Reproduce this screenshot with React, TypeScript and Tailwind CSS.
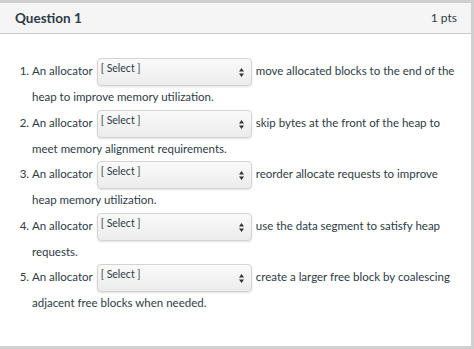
import React from "react";

const items = [
  { before: "An allocator", after: "move allocated blocks to the end of the heap to improve memory utilization." },
  { before: "An allocator", after: "skip bytes at the front of the heap to meet memory alignment requirements." },
  { before: "An allocator", after: "reorder allocate requests to improve heap memory utilization." },
  { before: "An allocator", after: "use the data segment to satisfy heap requests." },
  { before: "An allocator", after: "create a larger free block by coalescing adjacent free blocks when needed." },
];

function Select() {
  return (
    <span className="relative mx-[4px] -my-[2px] inline-block h-[28px] w-[155px] rounded-[4px] border border-[#d3d3d3] bg-gradient-to-b from-[#fafafa] to-[#ececec] align-middle shadow-[0_1px_2px_rgba(0,0,0,0.12)]">
      <span className="absolute left-[3px] top-[2px] text-[10.5px] leading-[14px] text-[#2d3b45]">[ Select ]</span>
      <svg className="absolute right-[7px] top-[9px]" width="5" height="9" viewBox="0 0 5 9">
        <path d="M2.5 0 L5 3.5 L0 3.5 Z" fill="#333" />
        <path d="M2.5 9 L5 5.5 L0 5.5 Z" fill="#333" />
      </svg>
    </span>
  );
}

export default function App() {
  return (
    <div className="h-[349px] w-[474px] overflow-hidden bg-white font-['Lato','Open_Sans',sans-serif] text-[#2d3b45]">
      <div className="flex h-full flex-col border-t-[3px] border-r-[3px] border-b-[3px] border-[#d0d0d0]">
        <div className="flex h-[31px] items-center justify-between border-b border-[#c8c8c8] bg-[#f5f5f5] pl-[15px] pr-[14px]">
          <span className="text-[13.5px] font-bold">Question 1</span>
          <span className="text-[12px]">1 pts</span>
        </div>
        <ol className="mt-[24px] list-decimal pl-[32px] pr-[12px] text-[11.5px] leading-[25.5px]">
          {items.map((it, i) => (
            <li key={i}>
              {it.before}
              <Select />
              {it.after}
            </li>
          ))}
        </ol>
      </div>
    </div>
  );
}
